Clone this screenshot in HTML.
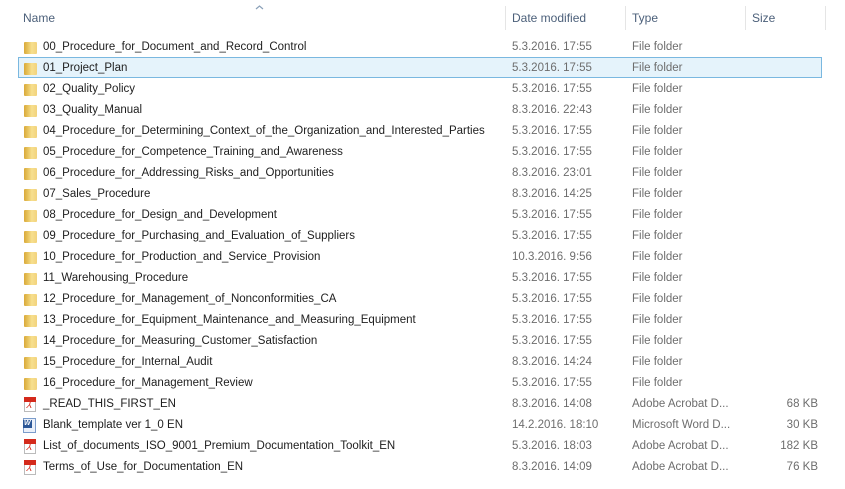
<!DOCTYPE html><html><head><style>
body{margin:0;width:845px;height:489px;background:#fff;font-family:"Liberation Sans",sans-serif;font-size:11.5px;color:#1e1e1e;position:relative;overflow:hidden}
.h{position:absolute;top:11px;color:#4c607a;font-size:12px}
.d{position:absolute;top:6px;width:1px;height:24px;background:#e5e5e5}
.r{position:absolute;left:18px;width:804px;height:21px;line-height:21px}
.r.s{background:#e5f3fb;border:1px solid #7ab8e0;box-sizing:border-box;line-height:19px}
.r span{position:absolute;white-space:nowrap}
.n{left:25px}.t{left:494px}.y{left:614px;color:#6d6d6d}.z{right:4px;color:#6d6d6d}
.t{color:#6d6d6d}
.f{position:absolute;left:6px;top:5px;width:13px;height:12px;background:linear-gradient(90deg,#d9a93a 0,#e8c45e 30%,#f7df8f 60%,#f2d37c);border-radius:1px}
.p{position:absolute;left:6px;top:3px;width:12px;height:15px;background:#fff;border:1px solid #bbb;box-sizing:border-box}
.p:before{content:"";position:absolute;left:-1px;top:-1px;width:12px;height:5px;background:#d42a1c}
.p:after{content:"⅄";position:absolute;left:1px;top:3px;font-size:9px;line-height:9px;color:#d42a1c}
.w{position:absolute;left:5px;top:3px;width:13px;height:15px;background:#eaf0fa;border:1px solid #7b9ccb;box-sizing:border-box}
.w:before{content:"W";position:absolute;left:-1px;top:1px;background:#2b5797;color:#fff;font-size:7px;line-height:8px;padding:0 1px;font-weight:bold}
</style></head><body>
<svg style="position:absolute;left:255px;top:5px" width="9" height="5"><path d="M1 4L4.5 1L8 4" fill="none" stroke="#8aa0b8" stroke-width="1.2"/></svg>
<div class="h" style="left:23px">Name</div>
<div class="d" style="left:505px"></div><div class="h" style="left:512px">Date modified</div>
<div class="d" style="left:625px"></div><div class="h" style="left:632px">Type</div>
<div class="d" style="left:745px"></div><div class="h" style="left:752px">Size</div>
<div class="d" style="left:825px"></div>
<div class="r" style="top:37px"><i class="f"></i><span class="n">00_Procedure_for_Document_and_Record_Control</span><span class="t">5.3.2016. 17:55</span><span class="y">File folder</span></div>
<div class="r s" style="top:57px"><i class="f" style="left:5px;top:5px"></i><span class="n" style="left:24px;top:1px">01_Project_Plan</span><span class="t" style="left:493px;top:1px">5.3.2016. 17:55</span><span class="y" style="left:613px;top:1px">File folder</span></div>
<div class="r" style="top:79px"><i class="f"></i><span class="n">02_Quality_Policy</span><span class="t">5.3.2016. 17:55</span><span class="y">File folder</span></div>
<div class="r" style="top:100px"><i class="f"></i><span class="n">03_Quality_Manual</span><span class="t">8.3.2016. 22:43</span><span class="y">File folder</span></div>
<div class="r" style="top:121px"><i class="f"></i><span class="n">04_Procedure_for_Determining_Context_of_the_Organization_and_Interested_Parties</span><span class="t">5.3.2016. 17:55</span><span class="y">File folder</span></div>
<div class="r" style="top:142px"><i class="f"></i><span class="n">05_Procedure_for_Competence_Training_and_Awareness</span><span class="t">5.3.2016. 17:55</span><span class="y">File folder</span></div>
<div class="r" style="top:163px"><i class="f"></i><span class="n">06_Procedure_for_Addressing_Risks_and_Opportunities</span><span class="t">8.3.2016. 23:01</span><span class="y">File folder</span></div>
<div class="r" style="top:184px"><i class="f"></i><span class="n">07_Sales_Procedure</span><span class="t">8.3.2016. 14:25</span><span class="y">File folder</span></div>
<div class="r" style="top:205px"><i class="f"></i><span class="n">08_Procedure_for_Design_and_Development</span><span class="t">5.3.2016. 17:55</span><span class="y">File folder</span></div>
<div class="r" style="top:226px"><i class="f"></i><span class="n">09_Procedure_for_Purchasing_and_Evaluation_of_Suppliers</span><span class="t">5.3.2016. 17:55</span><span class="y">File folder</span></div>
<div class="r" style="top:247px"><i class="f"></i><span class="n">10_Procedure_for_Production_and_Service_Provision</span><span class="t">10.3.2016. 9:56</span><span class="y">File folder</span></div>
<div class="r" style="top:268px"><i class="f"></i><span class="n">11_Warehousing_Procedure</span><span class="t">5.3.2016. 17:55</span><span class="y">File folder</span></div>
<div class="r" style="top:289px"><i class="f"></i><span class="n">12_Procedure_for_Management_of_Nonconformities_CA</span><span class="t">5.3.2016. 17:55</span><span class="y">File folder</span></div>
<div class="r" style="top:310px"><i class="f"></i><span class="n">13_Procedure_for_Equipment_Maintenance_and_Measuring_Equipment</span><span class="t">5.3.2016. 17:55</span><span class="y">File folder</span></div>
<div class="r" style="top:331px"><i class="f"></i><span class="n">14_Procedure_for_Measuring_Customer_Satisfaction</span><span class="t">5.3.2016. 17:55</span><span class="y">File folder</span></div>
<div class="r" style="top:352px"><i class="f"></i><span class="n">15_Procedure_for_Internal_Audit</span><span class="t">8.3.2016. 14:24</span><span class="y">File folder</span></div>
<div class="r" style="top:373px"><i class="f"></i><span class="n">16_Procedure_for_Management_Review</span><span class="t">5.3.2016. 17:55</span><span class="y">File folder</span></div>
<div class="r" style="top:394px"><i class="p"></i><span class="n">_READ_THIS_FIRST_EN</span><span class="t">8.3.2016. 14:08</span><span class="y">Adobe Acrobat D...</span><span class="z">68 KB</span></div>
<div class="r" style="top:415px"><i class="w"></i><span class="n">Blank_template ver 1_0 EN</span><span class="t">14.2.2016. 18:10</span><span class="y">Microsoft Word D...</span><span class="z">30 KB</span></div>
<div class="r" style="top:436px"><i class="p"></i><span class="n">List_of_documents_ISO_9001_Premium_Documentation_Toolkit_EN</span><span class="t">5.3.2016. 18:03</span><span class="y">Adobe Acrobat D...</span><span class="z">182 KB</span></div>
<div class="r" style="top:457px"><i class="p"></i><span class="n">Terms_of_Use_for_Documentation_EN</span><span class="t">8.3.2016. 14:09</span><span class="y">Adobe Acrobat D...</span><span class="z">76 KB</span></div>
</body></html>
